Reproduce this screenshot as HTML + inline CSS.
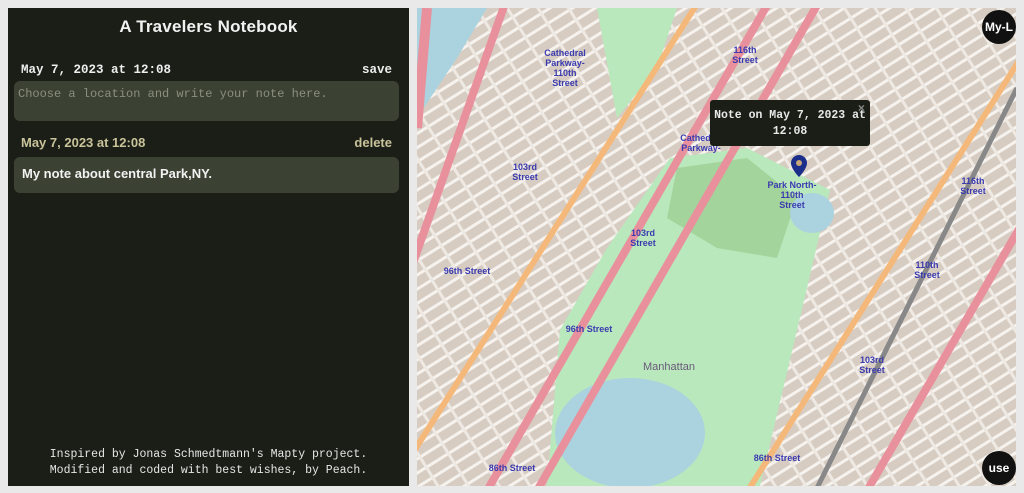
<!DOCTYPE html>
<html><head><meta charset="utf-8"><style>
html,body{margin:0;padding:0;background:#e9e9e9;width:1024px;height:493px;overflow:hidden}
.side{position:absolute;left:8px;top:8px;width:401px;height:478px;background:#1b1e17;color:#eee;font-family:"Liberation Mono",monospace}
h1{margin:0;position:absolute;top:9px;width:100%;text-align:center;font:bold 17px "Comic Sans MS","Liberation Sans",sans-serif;color:#f2f2f2;letter-spacing:0.2px}
.row{position:absolute;left:13px;right:17px;font-size:12.5px;font-weight:bold;display:flex;justify-content:space-between}
.box{position:absolute;left:6px;right:10px;background:#3b4133;border-radius:6px}
.foot{position:absolute;bottom:7px;width:100%;text-align:center;font-size:11.5px;line-height:16px;color:#e6e6e6}
.map{position:absolute;left:417px;top:8px;width:599px;height:478px;overflow:hidden;background:#ddd2c8}
.pop{position:absolute;left:293px;top:92px;width:160px;height:46px;background:#1b1e17;border-radius:3px;color:#e8e8e8;font:bold 11.5px "Liberation Mono",monospace;text-align:center;line-height:16px;padding-top:8px;box-sizing:border-box}
.circ{position:absolute;width:34px;height:34px;border-radius:50%;background:#111;color:#fff;font:bold 12px "Comic Sans MS","Liberation Sans",sans-serif;line-height:34px;text-align:center}
</style></head><body>
<div class="side">
<h1>A Travelers Notebook</h1>
<div class="row" style="top:55px"><span>May 7, 2023 at 12:08</span><span>save</span></div>
<div class="box" style="top:73px;height:40px"><div style="padding:6px 4px;font-size:12px;color:#8a8f7e">Choose a location and write your note here.</div></div>
<div class="row" style="top:127px;font-family:'Comic Sans MS','Liberation Sans',sans-serif;color:#c9c39a;font-size:13px"><span>May 7, 2023 at 12:08</span><span>delete</span></div>
<div class="box" style="top:149px;height:36px"><div style="padding:9px 8px;font:bold 13px 'Comic Sans MS','Liberation Sans',sans-serif;color:#f2f2f2">My note about central Park,NY.</div></div>
<div class="foot">Inspired by Jonas Schmedtmann's Mapty project.<br>Modified and coded with best wishes, by Peach.</div>
</div>
<div class="map">
<svg width="599" height="478" viewBox="0 0 599 478">
<defs><pattern id="g" width="26" height="12" patternUnits="userSpaceOnUse" patternTransform="rotate(-32)">
<rect width="26" height="12" fill="#d6ccc2"/><rect y="9" width="26" height="3" fill="#f6f2ee"/><rect x="23" width="3" height="12" fill="#efe9e3"/></pattern></defs>
<rect width="599" height="478" fill="url(#g)"/>
<polygon points="0,0 70,0 40,50 0,110" fill="#aad3df"/>
<polygon points="180,0 260,0 240,60 200,110" fill="#b9e8bc"/>
<polygon points="253,150 330,140 413,182 390,280 343,478 130,478 143,322 190,240" fill="#b9e8bc"/>
<polygon points="260,160 330,150 380,190 360,250 300,240 250,210" fill="#a3d49b"/>
<ellipse cx="213" cy="425" rx="75" ry="55" fill="#aad3df"/>
<ellipse cx="395" cy="205" rx="22" ry="20" fill="#aad3df"/>
<g stroke="#f4b97a" stroke-width="6"><line x1="-20" y1="470" x2="290" y2="-20"/><line x1="320" y1="500" x2="610" y2="40"/></g>
<g stroke="#e8919d" stroke-width="8"><line x1="60" y1="500" x2="360" y2="-20"/><line x1="110" y1="500" x2="410" y2="-20"/><line x1="440" y1="500" x2="620" y2="190"/><line x1="-20" y1="300" x2="90" y2="-10"/></g>
<line x1="390" y1="500" x2="600" y2="80" stroke="#888" stroke-width="5"/>
<line x1="10" y1="0" x2="0" y2="120" stroke="#e8919d" stroke-width="10"/>
<path d="M374 155a8 8 0 1 1 16 0c0 6-8 14-8 14s-8-8-8-14z" fill="#1b2f8a"/><circle cx="382" cy="155" r="3" fill="#c7a57a"/>
<g font-family="Liberation Sans,sans-serif" font-size="9" font-weight="bold" fill="#3b3bb0" text-anchor="middle">
<text x="148" y="48">Cathedral</text><text x="148" y="58">Parkway-</text><text x="148" y="68">110th</text><text x="148" y="78">Street</text>
<text x="328" y="45">116th</text><text x="328" y="55">Street</text>
<text x="108" y="162">103rd</text><text x="108" y="172">Street</text>
<text x="226" y="228">103rd</text><text x="226" y="238">Street</text>
<text x="50" y="266">96th Street</text><text x="172" y="324">96th Street</text>
<text x="375" y="180">Park North-</text><text x="375" y="190">110th</text><text x="375" y="200">Street</text>
<text x="510" y="260">110th</text><text x="510" y="270">Street</text>
<text x="556" y="176">116th</text><text x="556" y="186">Street</text>
<text x="455" y="355">103rd</text><text x="455" y="365">Street</text>
<text x="95" y="463">86th Street</text><text x="360" y="453">86th Street</text>
<text x="284" y="133">Cathedral</text><text x="284" y="143">Parkway-</text>
</g>
<text x="252" y="362" font-family="Liberation Sans,sans-serif" font-size="11" fill="#6a5a7a" text-anchor="middle">Manhattan</text>
</svg>
<div class="pop">Note on May 7, 2023 at<br>12:08<span style="position:absolute;right:5px;top:1px;color:#888;font-size:12px">×</span></div>
<div class="circ" style="left:565px;top:2px">My-L</div>
<div class="circ" style="left:565px;top:443px">use</div>
</div>
</body></html>
